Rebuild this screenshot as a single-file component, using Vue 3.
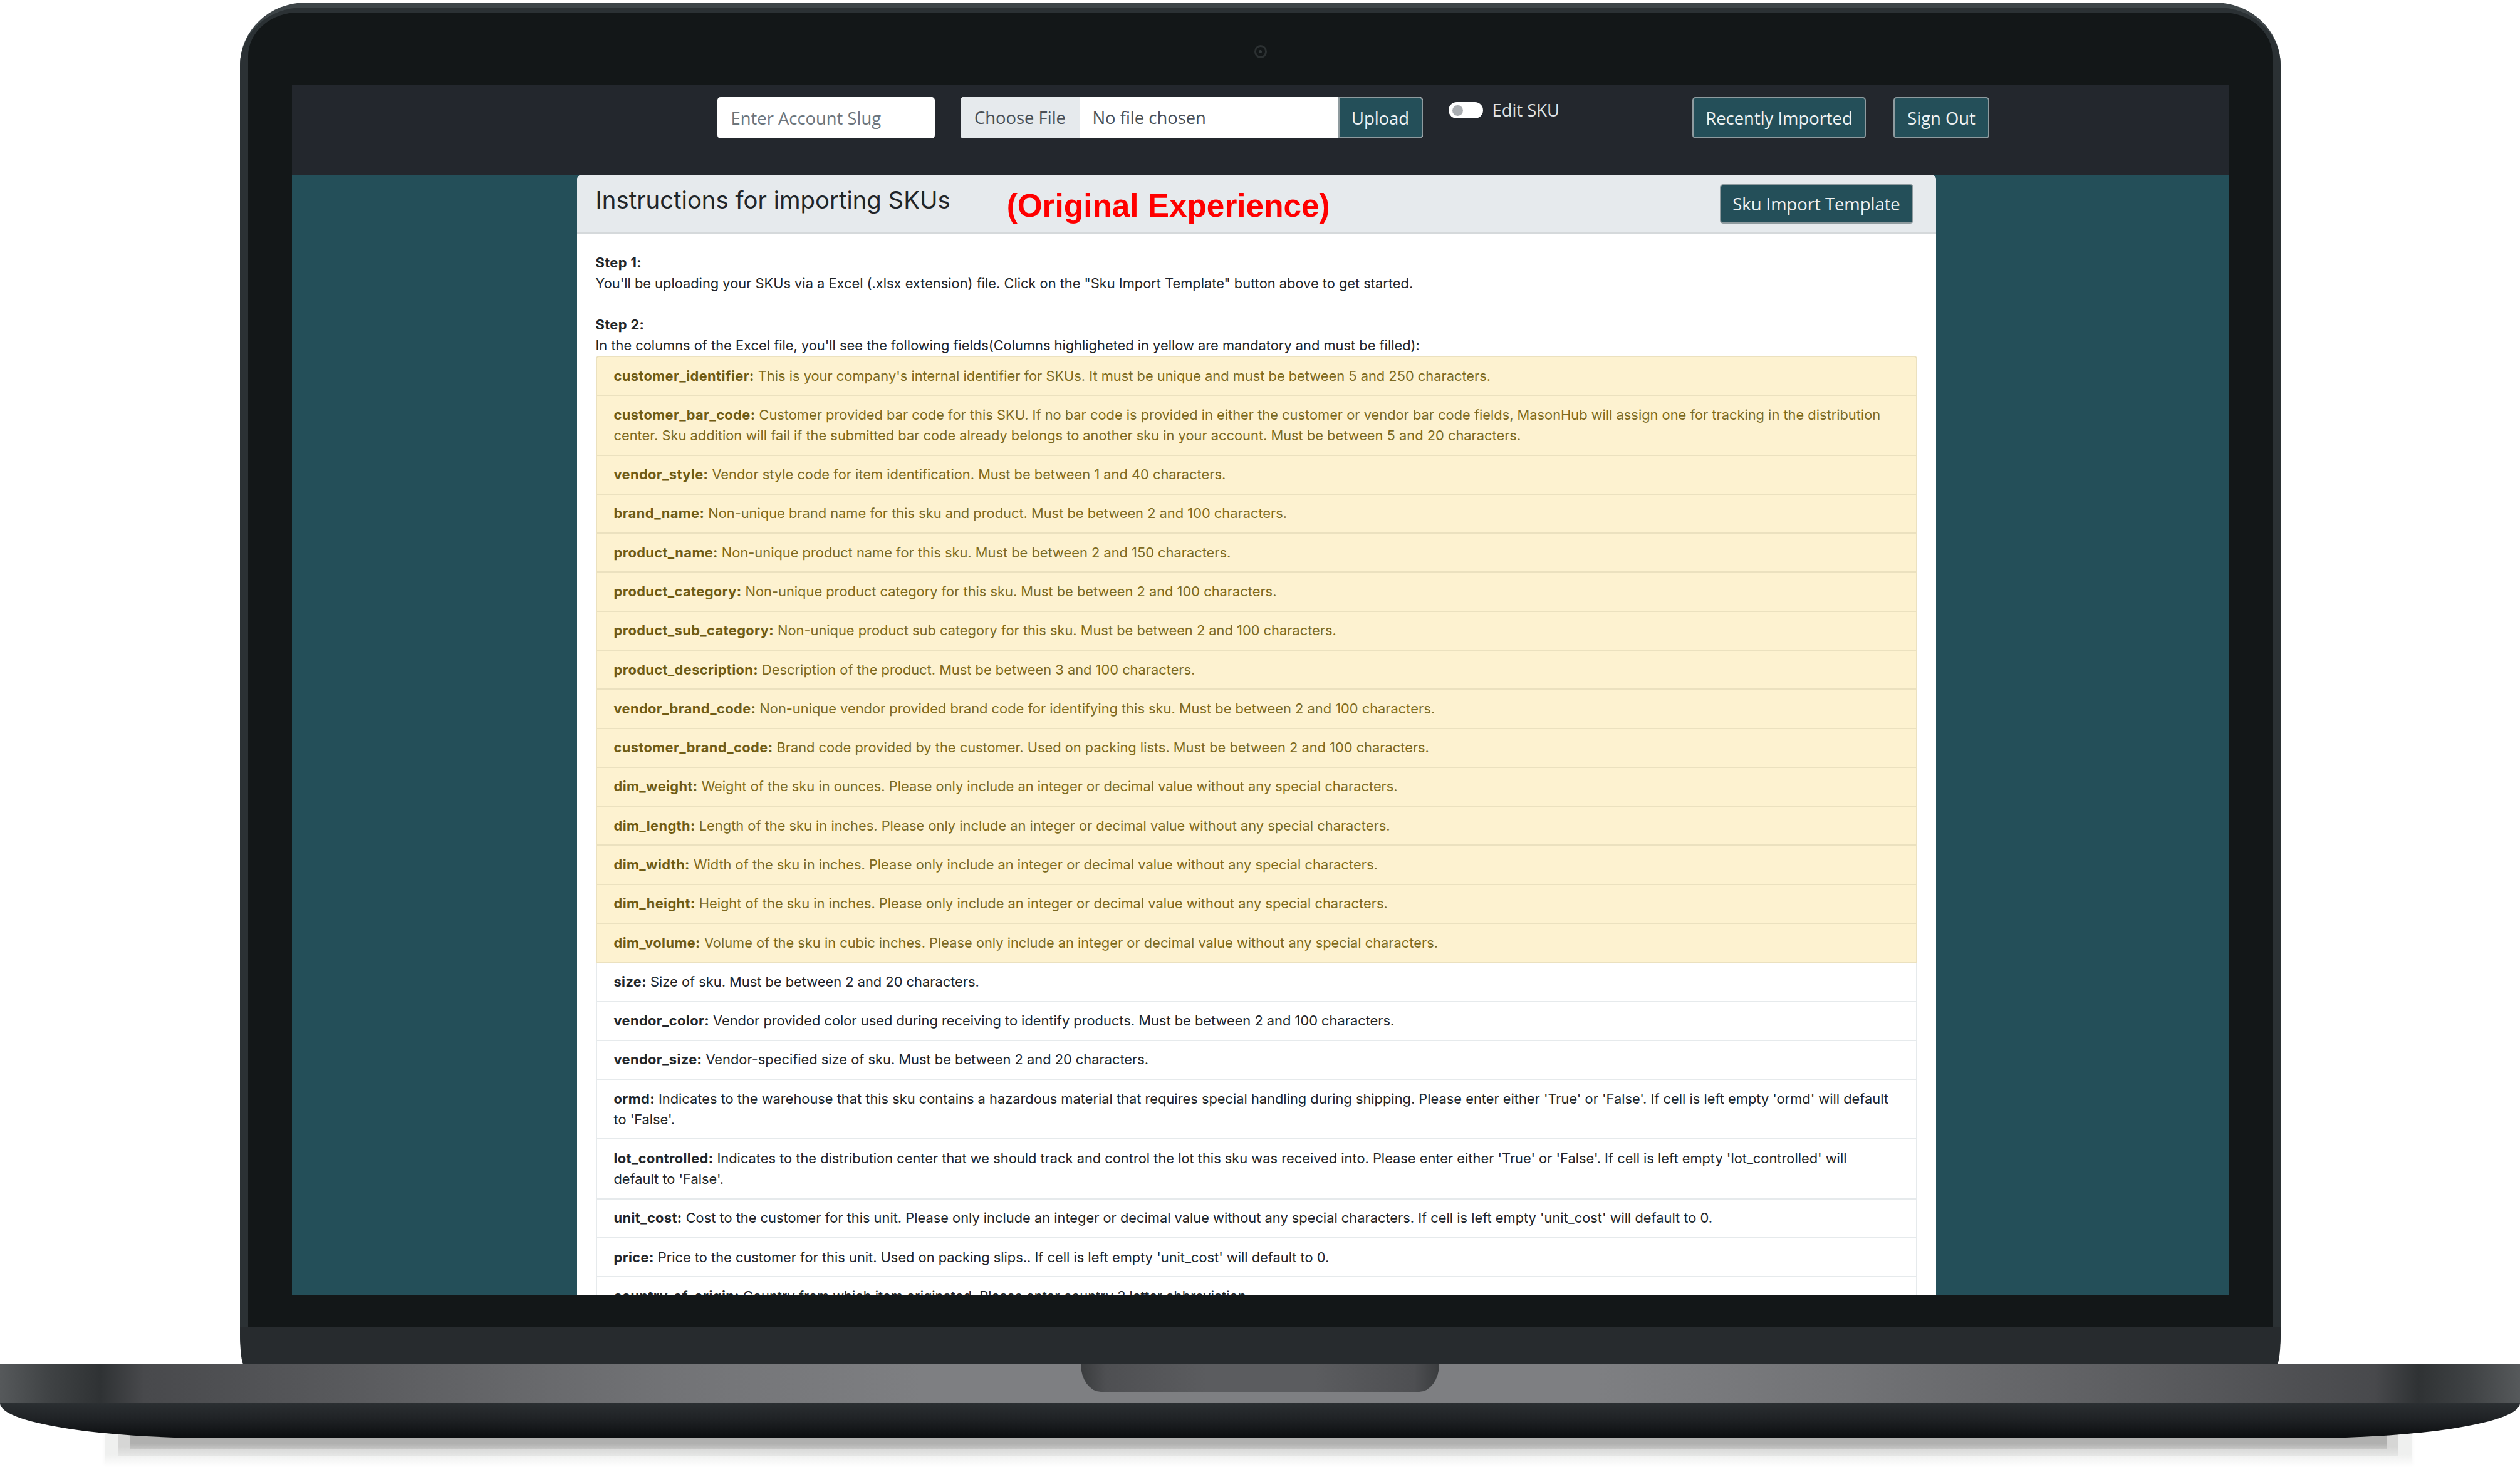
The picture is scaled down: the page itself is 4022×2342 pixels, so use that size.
<template>
  <div class="page">
    <div class="lid">
      <div class="lid-inner">
        <div class="bezel">
          <div class="camera"><span></span></div>
          <div class="screen">
            <!-- navbar -->
            <div class="navbar">
              <input class="slug" type="text" placeholder="Enter Account Slug" />
              <div class="file-group">
                <span class="choose">Choose File</span>
                <span class="chosen">No file chosen</span>
                <button class="btn upload">Upload</button>
              </div>
              <div class="switch"><span></span></div>
              <span class="switch-label">Edit SKU</span>
              <button class="btn recent">Recently Imported</button>
              <button class="btn signout">Sign Out</button>
            </div>

            <!-- card -->
            <div class="card">
              <div class="card-header">
                <h4>Instructions for importing SKUs</h4>
                <span class="flag">(Original Experience)</span>
                <button class="btn template">Sku Import Template</button>
              </div>
              <div class="card-body">
                <b>Step 1:</b><br />
                You'll be uploading your SKUs via a Excel (.xlsx extension) file. Click on the "Sku Import Template" button above to get started.<br /><br />
                <b>Step 2:</b><br />
                In the columns of the Excel file, you'll see the following fields(Columns highligheted in yellow are mandatory and must be filled):
                <ul class="fields">
                  <li v-for="f in fields" :key="f.name" :class="{ required: f.required }">
                    <b>{{ f.name }}:</b> {{ f.text }}
                  </li>
                </ul>
              </div>
            </div>
          </div>
        </div>
        <div class="chin"></div>
      </div>
    </div>

    <div class="base">
      <div class="base-top"><div class="notch"></div></div>
      <div class="base-bottom"></div>
    </div>
    <div class="shadow">
      <div class="shadow-mid">
        <div class="shadow-core"></div>
      </div>
    </div>
  </div>
</template>

<script setup>
const between = (a, b) => `Must be between ${a} and ${b} characters.`;
const numeric = "Please only include an integer or decimal value without any special characters.";

const fields = [
  { name: "customer_identifier", required: true, text: `This is your company's internal identifier for SKUs. It must be unique and must be between 5 and 250 characters.` },
  { name: "customer_bar_code", required: true, text: `Customer provided bar code for this SKU. If no bar code is provided in either the customer or vendor bar code fields, MasonHub will assign one for tracking in the distribution center. Sku addition will fail if the submitted bar code already belongs to another sku in your account. ${between(5, 20)}` },
  { name: "vendor_style", required: true, text: `Vendor style code for item identification. ${between(1, 40)}` },
  { name: "brand_name", required: true, text: `Non-unique brand name for this sku and product. ${between(2, 100)}` },
  { name: "product_name", required: true, text: `Non-unique product name for this sku. ${between(2, 150)}` },
  { name: "product_category", required: true, text: `Non-unique product category for this sku. ${between(2, 100)}` },
  { name: "product_sub_category", required: true, text: `Non-unique product sub category for this sku. ${between(2, 100)}` },
  { name: "product_description", required: true, text: `Description of the product. ${between(3, 100)}` },
  { name: "vendor_brand_code", required: true, text: `Non-unique vendor provided brand code for identifying this sku. ${between(2, 100)}` },
  { name: "customer_brand_code", required: true, text: `Brand code provided by the customer. Used on packing lists. ${between(2, 100)}` },
  { name: "dim_weight", required: true, text: `Weight of the sku in ounces. ${numeric}` },
  { name: "dim_length", required: true, text: `Length of the sku in inches. ${numeric}` },
  { name: "dim_width", required: true, text: `Width of the sku in inches. ${numeric}` },
  { name: "dim_height", required: true, text: `Height of the sku in inches. ${numeric}` },
  { name: "dim_volume", required: true, text: `Volume of the sku in cubic inches. ${numeric}` },
  { name: "size", text: `Size of sku. ${between(2, 20)}` },
  { name: "vendor_color", text: `Vendor provided color used during receiving to identify products. ${between(2, 100)}` },
  { name: "vendor_size", text: `Vendor-specified size of sku. ${between(2, 20)}` },
  { name: "ormd", text: `Indicates to the warehouse that this sku contains a hazardous material that requires special handling during shipping. Please enter either 'True' or 'False'. If cell is left empty 'ormd' will default to 'False'.` },
  { name: "lot_controlled", text: `Indicates to the distribution center that we should track and control the lot this sku was received into. Please enter either 'True' or 'False'. If cell is left empty 'lot_controlled' will default to 'False'.` },
  { name: "unit_cost", text: `Cost to the customer for this unit. ${numeric} If cell is left empty 'unit_cost' will default to 0.` },
  { name: "price", text: `Price to the customer for this unit. Used on packing slips.. If cell is left empty 'unit_cost' will default to 0.` },
  { name: "country_of_origin", text: `Country from which item originated. Please enter country 2 letter abbreviation.` },
];
</script>

<style>
html, body {
  margin: 0;
  background: #fff;
}
</style>

<style scoped>
.page {
  width: 4022px;
  height: 2342px;
  padding-top: 4px;
  box-sizing: border-box;
  overflow: hidden;
  background: #fff;
  font-family: Inter, "Liberation Sans", sans-serif;
}

/* laptop lid */
.lid {
  width: 3257px;
  margin: 0 auto;
  padding-top: 8px;
  box-sizing: border-box;
  background: #3e4548;
  border-radius: 105px 105px 8px 8px / 100px 100px 60px 60px;
}
.lid-inner {
  padding: 8px 13px 0;
  background: #2b3134;
  border-radius: 100px 100px 8px 8px / 92px 92px 60px 60px;
}
.bezel {
  position: relative;
  padding: 116px 70px 50px;
  background: #131718;
  border-radius: 80px 80px 0 0 / 70px 70px 0 0;
}
.camera {
  position: absolute;
  left: 1606px;
  top: 52px;
  width: 20px;
  height: 21px;
  box-sizing: border-box;
  border: 3px solid #2c3132;
  border-radius: 50%;
  display: flex;
  align-items: center;
  justify-content: center;
}
.camera span {
  width: 5px;
  height: 5px;
  border-radius: 50%;
  background: #33393a;
}
.chin {
  height: 60px;
  margin: 0 -13px;
  background: #272b2e;
  border-radius: 0 0 6px 6px / 0 0 50px 50px;
}

.screen {
  height: 1932px;
  overflow: hidden;
  background: #244f59;
}

/* navbar */
.navbar {
  height: 143px;
  box-sizing: border-box;
  padding: 19px 0 0 679px;
  display: flex;
  align-items: flex-start;
  background: #23272d;
  font-family: "Open Sans", "Liberation Sans", sans-serif;
  font-size: 27.4px;
}
.slug {
  width: 347px;
  height: 66px;
  box-sizing: border-box;
  padding: 0 22px;
  border: 0;
  border-radius: 5px;
  background: #fff;
  font: inherit;
  color: #495057;
}
.slug::placeholder {
  color: #6c757d;
}
.file-group {
  display: flex;
  width: 738px;
  height: 66px;
  margin-left: 41px;
  border-radius: 5px;
  overflow: hidden;
  background: #fff;
  color: #495057;
}
.choose {
  width: 191px;
  text-align: center;
  line-height: 66px;
  background: #e6eaed;
}
.chosen {
  flex: 1;
  padding-left: 20px;
  line-height: 66px;
}
.btn {
  height: 66px;
  padding: 0;
  box-sizing: border-box;
  border: 2px solid #8f9b9f;
  border-radius: 5px;
  background: #244f59;
  color: #eef2f3;
  font-family: "Open Sans", "Liberation Sans", sans-serif;
  font-size: 27.4px;
}
.upload {
  width: 135px;
  border-radius: 0 5px 5px 0;
}
.switch {
  width: 55px;
  height: 26px;
  margin: 8px 0 0 41px;
  padding: 0 0 0 6px;
  box-sizing: border-box;
  display: flex;
  align-items: center;
  border-radius: 13px;
  background: #fff;
}
.switch span {
  width: 17px;
  height: 17px;
  border-radius: 50%;
  background: #a9adb1;
}
.switch-label {
  margin-left: 15px;
  line-height: 42px;
  color: #dfe3e6;
}
.recent {
  width: 277px;
  margin-left: 212px;
}
.signout {
  width: 153px;
  margin-left: 44px;
}

/* card */
.card {
  width: 2169px;
  margin-left: 455px;
  border-radius: 8px 8px 0 0;
  overflow: hidden;
  background: #fff;
}
.card-header {
  height: 94px;
  box-sizing: border-box;
  padding: 0 36px 0 30px;
  display: flex;
  align-items: center;
  background: #e6eaed;
  border-bottom: 2px solid #d5d9db;
}
.card-header h4 {
  margin: -12px 0 0;
  font-size: 38.3px;
  font-weight: 400;
  color: #212529;
}
.flag {
  margin: 6px 0 0 90px;
  font-family: "Liberation Sans", Arial, sans-serif;
  font-size: 51.3px;
  font-weight: 700;
  color: #ff0000;
}
.template {
  width: 309px;
  height: 63px;
  margin-left: auto;
}
.card-body {
  padding: 30px 30px 0;
  font-size: 21.83px;
  line-height: 33px;
  color: #212529;
}
.card-body b {
  font-weight: 700;
  letter-spacing: 0.38px;
}

/* field list */
.fields {
  list-style: none;
  margin: 0;
  padding: 0;
}
.fields li {
  padding: 13.65px 34px 13.65px 27px;
  border: 2px solid #e6eaec;
  border-width: 0 2px 2px;
}
.fields li:first-child {
  border-top: 2px solid #f0e6c4;
  border-radius: 5px 5px 0 0;
}
.fields li.required {
  background: #fdf2d0;
  color: #7d6a20;
  border-color: #ebe1bf;
}
.fields li.required b {
  color: #6f5b14;
}

/* laptop base */
.base {
  position: relative;
  z-index: 1;
}
.base-top {
  height: 62px;
  display: flex;
  justify-content: center;
  background: linear-gradient(90deg, #56595b 0, #3f4244 80px, #2f3234 160px, #48494c 230px, #5f6063 670px, #727376 1070px, #7e7f82 1470px, #7e7f82 2550px, #727376 2950px, #5f6063 3350px, #48494c 3790px, #2f3234 3860px, #3f4244 3940px, #56595b 4022px);
}
.notch {
  width: 572px;
  height: 44px;
  border-radius: 0 0 32px 32px / 0 0 44px 44px;
  background: linear-gradient(90deg, #3a3c3e 0, #4e4f52 40px, #5b5c5f 200px, #5b5c5f 372px, #4e4f52 532px, #3a3c3e 100%);
}
.base-bottom {
  height: 56px;
  border-radius: 0 0 345px 345px / 0 0 56px 56px;
  background: linear-gradient(180deg, #2b2f32 0, #1f2225 45%, #0b0d0f 100%);
}
.shadow {
  width: 3683px;
  margin: -10px 0 0 167px;
  padding: 0 22px 12px;
  box-sizing: border-box;
  background: linear-gradient(180deg, #eff0ef 70%, #fbfbfb 100%);
  box-shadow: 0 0 6px 2px #fafafa;
}
.shadow-mid {
  padding: 0 18px 12px;
  background: linear-gradient(180deg, #d6d6d5 60%, #e6e7e6 100%);
}
.shadow-core {
  height: 27px;
  background: linear-gradient(180deg, #b0b0af 70%, #c6c6c5 100%);
}
</style>
